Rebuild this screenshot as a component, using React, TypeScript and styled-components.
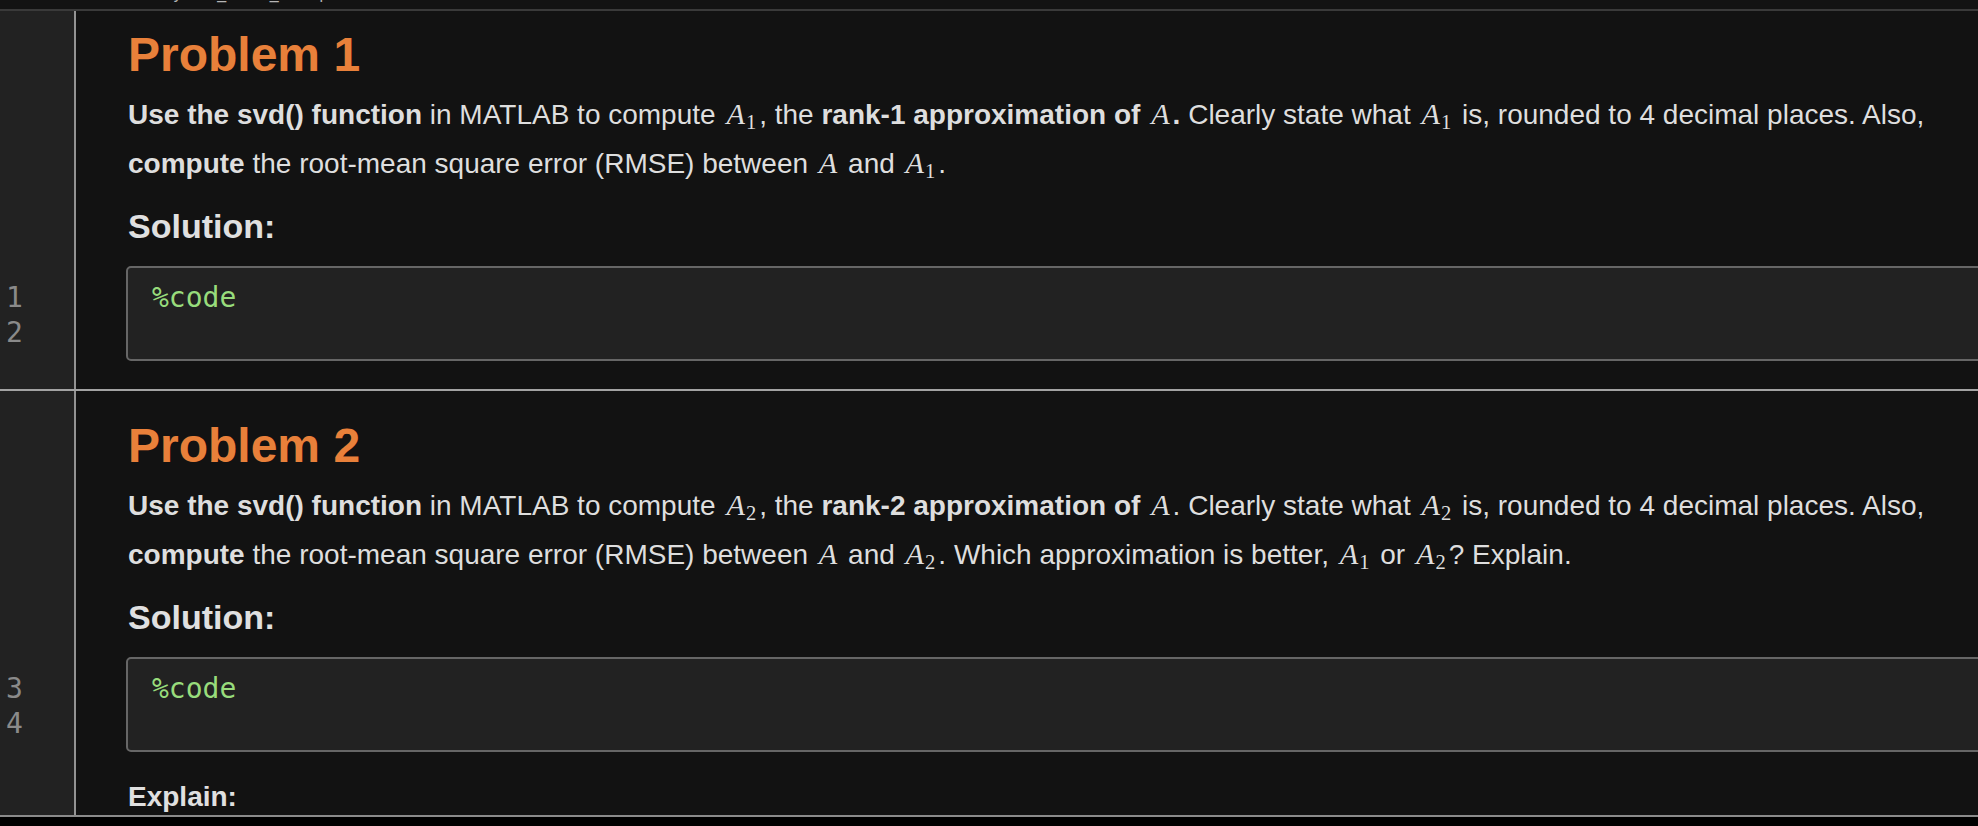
import React from "react";
import styled, { createGlobalStyle } from "styled-components";

const GlobalStyle = createGlobalStyle`
  *, *::before, *::after { box-sizing: border-box; }
  html, body { margin: 0; padding: 0; background: #000; overflow: hidden; }
  body { font-family: "Liberation Sans", Arial, Helvetica, sans-serif; }
`;

const Window = styled.div`
  width: 1978px;
  height: 826px;
  display: flex;
  flex-direction: column;
  background: #000;
  overflow: hidden;
`;

const TitleStrip = styled.header`
  flex: none;
  height: 11px;
  overflow: hidden;
  background: #131313;
  border-bottom: 2px solid #3a3a3a;
  padding-left: 131px;
`;

const TitleText = styled.div`
  font-size: 16px;
  line-height: 20px;
  margin-top: -16px;
  color: #b5b5b5;
  white-space: nowrap;
`;

const Viewport = styled.main`
  flex: none;
  height: 806px;
  overflow: hidden;
  background: #121212;
  border-bottom: 2px solid #8a8a8a;
`;

const Notebook = styled.div`
  margin-top: -11px;
  width: 2006px;
`;

const Cell = styled.section`
  display: grid;
  grid-template-columns: 76px 1fr;
  border-bottom: 2px solid #a3a3a3;
`;

const Gutter = styled.div<{ $pad?: number }>`
  background: #222222;
  border-right: 2px solid #939393;
  padding: ${(p) => p.$pad ?? 0}px 0 0 6px;
  font-family: "DejaVu Sans Mono", "Liberation Mono", monospace;
  font-size: 28px;
  line-height: 35px;
  color: #8a8a8a;
`;

const Block = styled.div<{ $top?: number; $bottom?: number; $left?: number }>`
  padding: ${(p) => p.$top ?? 0}px 0 ${(p) => p.$bottom ?? 0}px ${(p) => p.$left ?? 50}px;
  color: #dedede;
`;

const Heading = styled.h1`
  margin: 0;
  font-size: 48px;
  line-height: 58px;
  font-weight: 700;
  color: #e8803a;
`;

const Para = styled.p`
  margin: 6px 0 0;
  font-size: 28px;
  line-height: 48px;
  color: #dedede;
  width: 1878px;
`;

const Label = styled.div<{ $size: number; $line: number; $gap?: number }>`
  margin-top: ${(p) => p.$gap ?? 0}px;
  font-size: ${(p) => p.$size}px;
  line-height: ${(p) => p.$line}px;
  font-weight: 700;
  color: #e0e0e0;
`;

const CodeBox = styled.div`
  border: 2px solid #666666;
  border-radius: 5px;
  background: #222222;
  padding: 12px 24px 9px;
  font-family: "DejaVu Sans Mono", "Liberation Mono", monospace;
  font-size: 28px;
  line-height: 35px;
  color: #98dc7c;
`;

const CodeLine = styled.div`
  height: 35px;
  white-space: pre;
`;

const MathVar = styled.span`
  font-family: "Liberation Serif", "DejaVu Serif", serif;
  font-style: italic;
  font-weight: 400;
  font-size: 1.08em;
  margin: 0 3px;
`;

const Sub = styled.sub`
  font-style: normal;
  font-size: 0.68em;
  vertical-align: -0.22em;
  line-height: 0;
  margin-left: 1px;
`;

const M: React.FC<{ sub?: string }> = ({ sub }) => (
  <MathVar>
    A{sub ? <Sub>{sub}</Sub> : null}
  </MathVar>
);

const LineNumbers: React.FC<{ from: number }> = ({ from }) => (
  <>
    <div>{from}</div>
    <div>{from + 1}</div>
  </>
);

const CodeCell: React.FC<{ from: number }> = ({ from }) => (
  <>
    <Gutter $pad={33}>
      <LineNumbers from={from} />
    </Gutter>
    <Block $top={19}>
      <CodeBox>
        <CodeLine>%code</CodeLine>
        <CodeLine />
      </CodeBox>
    </Block>
  </>
);

export default function App() {
  return (
    <>
      <GlobalStyle />
      <Window>
        <TitleStrip>
          <TitleText>Activity2024_Matrix_Example</TitleText>
        </TitleStrip>
        <Viewport>
          <Notebook>
            <Cell>
              <Gutter />
              <Block $top={26} $left={52}>
                <Heading>Problem 1</Heading>
                <Para>
                  <strong>Use the svd() function</strong> in MATLAB to compute <M sub="1" />, the{" "}
                  <strong>
                    rank-1 approximation of <M />.
                  </strong>{" "}
                  Clearly state what <M sub="1" /> is, rounded to 4 decimal places. Also,{" "}
                  <strong>compute</strong> the root-mean square error (RMSE) between <M /> and{" "}
                  <M sub="1" />.
                </Para>
                <Label $size={34} $line={41} $gap={18}>
                  Solution:
                </Label>
              </Block>
              <CodeCell from={1} />
              <Gutter />
              <Block $top={28} />
            </Cell>
            <Cell>
              <Gutter />
              <Block $top={26} $left={52}>
                <Heading>Problem 2</Heading>
                <Para>
                  <strong>Use the svd() function</strong> in MATLAB to compute <M sub="2" />, the{" "}
                  <strong>rank-2 approximation of</strong> <M />. Clearly state what <M sub="2" /> is,
                  rounded to 4 decimal places. Also, <strong>compute</strong> the root-mean square error
                  (RMSE) between <M /> and <M sub="2" />. Which approximation is better, <M sub="1" /> or{" "}
                  <M sub="2" />? Explain.
                </Para>
                <Label $size={34} $line={41} $gap={18}>
                  Solution:
                </Label>
              </Block>
              <CodeCell from={3} />
              <Gutter />
              <Block $top={21} $bottom={40} $left={52}>
                <Label $size={28} $line={48}>
                  Explain:
                </Label>
              </Block>
            </Cell>
          </Notebook>
        </Viewport>
      </Window>
    </>
  );
}
